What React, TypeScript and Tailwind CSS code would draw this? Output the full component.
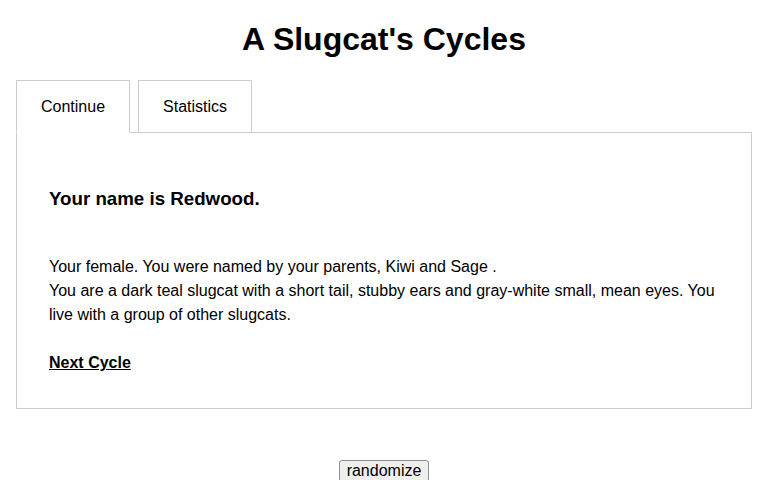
import { useState } from "react";

const TABS = ["Continue", "Statistics"];

export default function App() {
  const [tab, setTab] = useState(0);

  return (
    <div className="min-h-screen bg-white px-4 font-['Liberation_Sans',Arial,sans-serif] text-black">
      <h1 className="mt-[21px] mb-[22px] text-center text-[32px] leading-[37px] font-bold">A Slugcat's Cycles</h1>

      {/* tab bar */}
      <div className="flex gap-2">
        {TABS.map((t, i) => (
          <button
            key={t}
            onClick={() => setTab(i)}
            className={`relative z-10 h-[53px] border border-[#cccccc] bg-white px-6 text-base leading-[18px] ${tab === i ? "border-b-white" : ""}`}
          >
            {t}
          </button>
        ))}
      </div>

      <div className="-mt-px border border-[#cccccc] px-8 pt-[55px] pb-[33px]">
        {tab === 0 ? (
          <>
            <h3 className="text-[18.72px] leading-[21px] font-bold">Your name is Redwood.</h3>
            <p className="mt-[46px] text-base leading-6">
              Your female. You were named by your parents, Kiwi and Sage .
              <br />
              You are a dark teal slugcat with a short tail, stubby ears and gray-white small, mean eyes. You live with a group of other slugcats.
            </p>
            <p className="mt-6 text-base leading-6">
              <a href="#" className="font-bold underline">Next Cycle</a>
            </p>
          </>
        ) : (
          <p className="text-base leading-6">No statistics yet.</p>
        )}
      </div>

      <div className="mt-[51px] flex justify-center">
        <button className="rounded-[3px] border border-[#8f8f8f] bg-[#efefef] px-[7px] py-px text-base leading-[18px]">
          randomize
        </button>
      </div>
    </div>
  );
}
